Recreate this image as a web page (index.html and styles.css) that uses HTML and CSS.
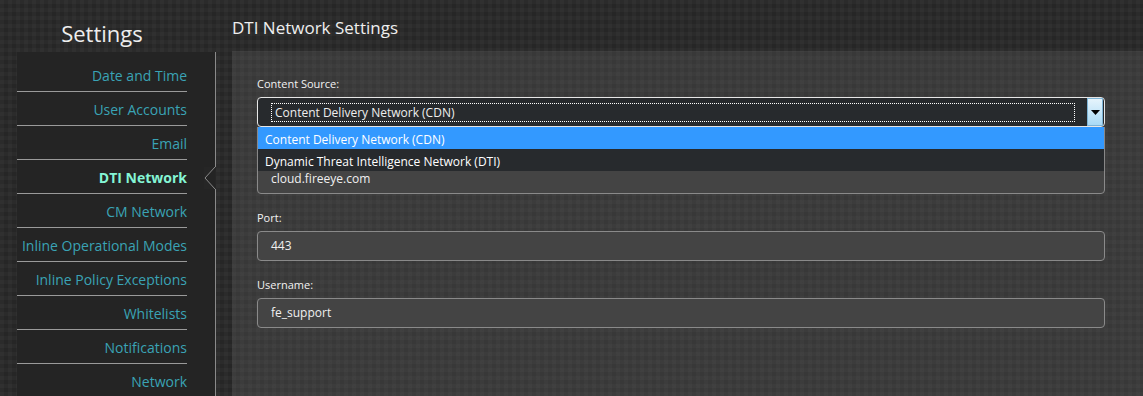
FILE: index.html
```html
<!DOCTYPE html>
<html lang="en">
<head>
    <meta charset="UTF-8">
    <title>DTI Network Settings</title>
    <link rel="stylesheet" href="styles.css">
</head>
<body>

    <div class="top-bar">
        <div class="top-title">Settings</div>
        <h2 class="page-title">DTI Network Settings</h2>
    </div>

    <div class="content">
        <div class="sidebar">
            <ul class="nav">
                <li><a href="#">Date and Time</a></li>
                <li><a href="#">User Accounts</a></li>
                <li><a href="#">Email</a></li>
                <li class="active"><a href="#">DTI Network</a></li>
                <li><a href="#">CM Network</a></li>
                <li><a href="#">Inline Operational Modes</a></li>
                <li><a href="#">Inline Policy Exceptions</a></li>
                <li><a href="#">Whitelists</a></li>
                <li><a href="#">Notifications</a></li>
                <li><a href="#">Network</a></li>
            </ul>
            <!-- notch pointing at the active item -->
            <svg class="notch" width="12" height="22" viewBox="0 0 12 22">
                <rect x="0" y="0" width="12" height="22" fill="#262626"/>
                <polyline points="11,0 1,11 11,22" fill="#242424" stroke="#8a8a8a" stroke-width="1"/>
            </svg>
        </div>

        <div class="panel">
            <div class="field">
                <label>Content Source:</label>
                <div class="select">
                    <span class="select-value">Content Delivery Network (CDN)</span>
                    <span class="select-btn">
                        <svg width="9" height="5" viewBox="0 0 9 5"><polygon points="0,0 9,0 4.5,5" fill="#000"/></svg>
                    </span>
                </div>
                <div class="select-list">
                    <div class="option selected">Content Delivery Network (CDN)</div>
                    <div class="option">Dynamic Threat Intelligence Network (DTI)</div>
                </div>
            </div>

            <div class="field">
                <!-- label hidden under the open list -->
                <div class="label-space"></div>
                <div class="input">cloud.fireeye.com</div>
            </div>

            <div class="field">
                <label>Port:</label>
                <div class="input">443</div>
            </div>

            <div class="field">
                <label>Username:</label>
                <div class="input">fe_support</div>
            </div>
        </div>
    </div>

</body>
</html>
```

FILE: styles.css
```css
body {
    margin: 0;
    font-family: "Open Sans", Arial, sans-serif;
    color: #eee;
    background-color: #262626;
    background-image:
        repeating-linear-gradient(90deg, rgba(255, 255, 255, 0.025) 0 4px, transparent 4px 8px),
        repeating-linear-gradient(0deg, rgba(255, 255, 255, 0.025) 0 4px, transparent 4px 8px);
    height: 396px;
    overflow: hidden;
}
.top-bar {
    display: flex;
    align-items: flex-start;
    height: 51px;
}
.top-title {
    width: 170px;
    margin-left: 17px;
    margin-top: 18px;
    text-align: center;
    font-size: 22px;
    line-height: 30px;
}
.page-title {
    margin: 16px 0 0 45px;
    font-size: 17px;
    line-height: 24px;
    font-weight: normal;
}
.content {
    display: flex;
    height: 345px;
}
.sidebar {
    position: relative;
    width: 198px;
    margin-left: 17px;
    margin-top: 1px;
    background-color: #242424;
    border-right: 1px solid #8a8a8a;
}
.nav {
    list-style: none;
    margin: 0;
    padding: 6px 28px 0 0;
}
.nav li {
    height: 33px;
    border-bottom: 1px solid #9a9a9a;
    text-align: right;
    line-height: 34px;
}
.nav li:last-child {
    border-bottom: none;
}
.nav a {
    color: #3aa3b5;
    text-decoration: none;
    font-size: 14px;
}
.nav li.active a {
    color: #84f5d5;
    font-weight: bold;
}
.notch {
    position: absolute;
    right: -1px;
    top: 115px;
}
.panel {
    flex: 1;
    margin-left: 16px;
    padding: 25px 38px 0 25px;
    background-color: #383838;
    background-image:
        repeating-linear-gradient(90deg, rgba(255, 255, 255, 0.02) 0 4px, transparent 4px 8px),
        repeating-linear-gradient(0deg, rgba(255, 255, 255, 0.02) 0 4px, transparent 4px 8px);
}
.field {
    position: relative;
    margin-bottom: 16px;
}
.field label {
    display: block;
    font-size: 11px;
    line-height: 15px;
    margin-bottom: 6px;
    color: #f2f2f2;
}
.label-space {
    height: 21px;
}
.select {
    display: flex;
    align-items: center;
    height: 28px;
    border: 1px solid #e6e6e6;
    border-radius: 4px;
    background-color: #272a2d;
    padding-left: 13px;
}
.select-value {
    flex: 1;
    font-size: 12px;
    line-height: 15px;
    padding: 1px 3px;
    border: 1px dotted #fff;
    margin-right: 12px;
}
.select-btn {
    display: flex;
    align-items: center;
    justify-content: center;
    width: 14px;
    height: 26px;
    margin-right: 1px;
    border: 1px solid #7eb4d6;
    background: linear-gradient(#e6f4fc, #a9daf6);
}
.select-list {
    position: absolute;
    left: 0;
    right: 0;
    top: 51px;
    z-index: 2;
    background-color: #272a2d;
    border-left: 1px solid #888;
    border-right: 1px solid #888;
}
.option {
    height: 22px;
    line-height: 25px;
    padding-left: 7px;
    font-size: 12px;
    color: #fff;
}
.option.selected {
    background-color: #3399ff;
}
.input {
    height: 28px;
    line-height: 28px;
    border: 1px solid #8a8a8a;
    border-radius: 4px;
    background-color: #444;
    padding-left: 13px;
    font-size: 12px;
    color: #f0f0f0;
}
```
